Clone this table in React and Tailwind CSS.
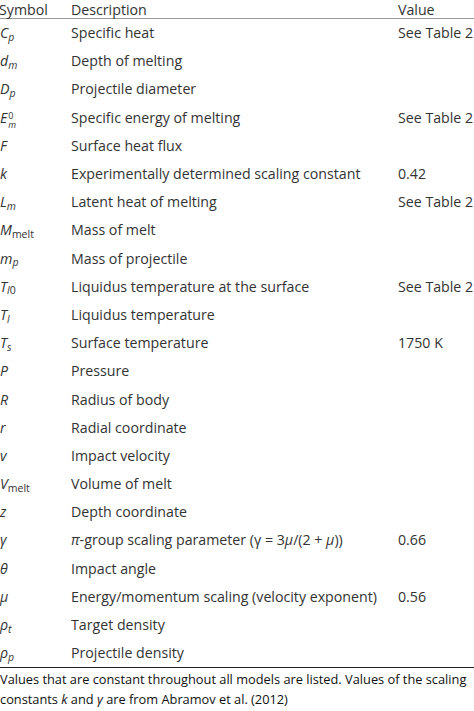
import React from 'react';

const Sym = ({ base, sub, sup, subItalic = true }) => (
  <span className="italic">
    {base}
    {sup ? (
      <span className="inline-flex flex-col align-middle text-[9px] leading-[9px] ml-[1px] relative top-[1px]">
        <span className="not-italic">{sup}</span>
        <span className="italic">{sub}</span>
      </span>
    ) : sub ? (
      <sub className={subItalic ? 'italic text-[10.5px]' : 'not-italic text-[10.5px]'}>{sub}</sub>
    ) : null}
  </span>
);

const rows = [
  { sym: <Sym base="C" sub="p" />, desc: 'Specific heat', value: 'See Table 2' },
  { sym: <Sym base="d" sub="m" />, desc: 'Depth of melting' },
  { sym: <Sym base="D" sub="p" />, desc: 'Projectile diameter' },
  { sym: <Sym base="E" sub="m" sup="0" />, desc: 'Specific energy of melting', value: 'See Table 2' },
  { sym: <Sym base="F" />, desc: 'Surface heat flux' },
  { sym: <Sym base="k" />, desc: 'Experimentally determined scaling constant', value: '0.42' },
  { sym: <Sym base="L" sub="m" />, desc: 'Latent heat of melting', value: 'See Table 2' },
  { sym: <Sym base="M" sub="melt" subItalic={false} />, desc: 'Mass of melt' },
  { sym: <Sym base="m" sub="p" />, desc: 'Mass of projectile' },
  {
    sym: (
      <span className="italic">
        T<sub className="text-[10.5px]">l<span className="not-italic">0</span></sub>
      </span>
    ),
    desc: 'Liquidus temperature at the surface',
    value: 'See Table 2',
  },
  { sym: <Sym base="T" sub="l" />, desc: 'Liquidus temperature' },
  { sym: <Sym base="T" sub="s" />, desc: 'Surface temperature', value: '1750 K' },
  { sym: <Sym base="P" />, desc: 'Pressure' },
  { sym: <Sym base="R" />, desc: 'Radius of body' },
  { sym: <Sym base="r" />, desc: 'Radial coordinate' },
  { sym: <Sym base="v" />, desc: 'Impact velocity' },
  { sym: <Sym base="V" sub="melt" subItalic={false} />, desc: 'Volume of melt' },
  { sym: <Sym base="z" />, desc: 'Depth coordinate' },
  {
    sym: <Sym base="γ" />,
    desc: (
      <>
        <span className="italic">π</span>-group scaling parameter (γ = 3<span className="italic">μ</span>/(2 + <span className="italic">μ</span>))
      </>
    ),
    value: '0.66',
  },
  { sym: <Sym base="θ" />, desc: 'Impact angle' },
  { sym: <Sym base="μ" />, desc: 'Energy/momentum scaling (velocity exponent)', value: '0.56' },
  { sym: <Sym base="ρ" sub="t" />, desc: 'Target density' },
  { sym: <Sym base="ρ" sub="p" />, desc: 'Projectile density' },
];

export default function App() {
  return (
    <div
      className="w-[474px] h-[711px] overflow-hidden bg-white text-[#333]"
      style={{ fontFamily: '"Open Sans", "DejaVu Sans", sans-serif' }}
    >
      {/* header */}
      <div className="flex h-[19px] items-center text-[14.2px] leading-[19px] border-b border-[#9a9a9a]">
        <div className="w-[71px] shrink-0 -ml-[1px]">Symbol</div>
        <div className="w-[328px] shrink-0 pl-[1px]">Description</div>
        <div className="flex-1 whitespace-nowrap">Value</div>
      </div>

      {/* body */}
      <div className="border-b border-[#222]">
        {rows.map((row, i) => (
          <div key={i} className="flex h-[28.2px] items-center text-[14.2px] leading-[20px]">
            <div className="w-[71px] shrink-0 whitespace-nowrap">{row.sym}</div>
            <div className="w-[327px] shrink-0 whitespace-nowrap">{row.desc}</div>
            <div className="flex-1 whitespace-nowrap overflow-hidden">{row.value}</div>
          </div>
        ))}
      </div>

      {/* footnote */}
      <div className="pt-[1px] text-[12.8px] leading-[20px] font-medium text-[#111] whitespace-nowrap">
        <div>Values that are constant throughout all models are listed. Values of the scaling</div>
        <div>
          constants <span className="italic">k</span> and <span className="italic">γ</span> are from Abramov et al. (2012)
        </div>
      </div>
    </div>
  );
}
